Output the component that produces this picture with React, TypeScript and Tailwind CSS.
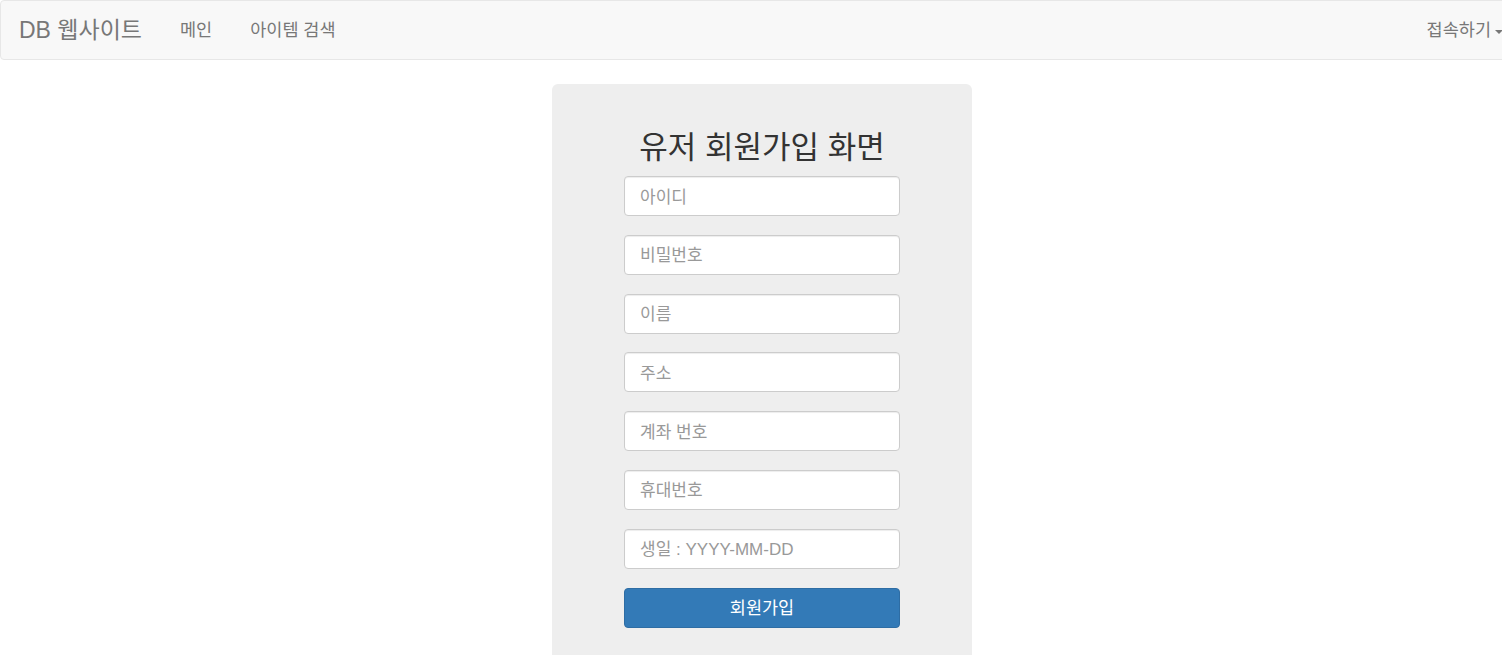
import React from "react";

const font = { fontFamily: '"Liberation Sans", "Noto Sans CJK KR", Arial, sans-serif' };

export default function App() {
  const fields = ["아이디", "비밀번호", "이름", "주소", "계좌 번호", "휴대번호", "생일 : YYYY-MM-DD"];
  return (
    <div className="w-full h-[655px] overflow-hidden bg-white" style={font}>
      <nav className="w-[1540px] h-[60px] bg-[#f8f8f8] border border-[#e7e7e7] rounded-[4px] flex items-center">
        <span className="ml-[18px] mt-[1px] text-[23px] text-[#777]">DB 웹사이트</span>
        <span className="ml-[38px] mt-[1px] text-[17.5px] text-[#777]">메인</span>
        <span className="ml-[38px] mt-[1px] text-[17.5px] text-[#777]">아이템 검색</span>
        <span className="ml-auto mr-[36px] mt-[1px] text-[17.5px] text-[#777] flex items-center">
          접속하기
          <span className="ml-[4px] mt-[3px] w-0 h-0 border-l-[4px] border-r-[4px] border-t-[4px] border-l-transparent border-r-transparent border-t-[#777]" />
        </span>
      </nav>
      <div className="flex justify-center mt-[24px]">
        <div className="w-[420px] ml-[22px] h-[600px] bg-[#eeeeee] rounded-[6px] flex flex-col items-center pt-[46px]">
          <h2 className="text-[31px] leading-[36px] text-[#333] mb-[10px]">유저 회원가입 화면</h2>
          {fields.map((f) => (
            <input
              key={f}
              placeholder={f}
              className="w-[276px] h-[40px] mb-[18.8px] bg-white border border-[#ccc] rounded-[4px] px-[15px] pt-[3px] pb-0 text-[17px] text-[#555] placeholder:text-[#999] shadow-[inset_0_1px_1px_rgba(0,0,0,0.075)] outline-none"
              style={font}
            />
          ))}
          <button
            className="w-[276px] h-[40px] pt-[2px] bg-[#337ab7] border border-[#2e6da4] rounded-[4px] text-white text-[17.5px]"
            style={font}
          >
            회원가입
          </button>
        </div>
      </div>
    </div>
  );
}
